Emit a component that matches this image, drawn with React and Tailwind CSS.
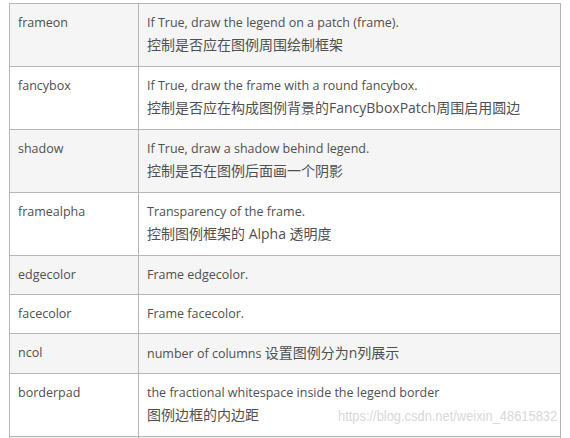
import React from "react"

const rows = [
  { name: "frameon", en: "If True, draw the legend on a patch (frame).", zh: "控制是否应在图例周围绘制框架", gray: true },
  { name: "fancybox", en: "If True, draw the frame with a round fancybox.", zh: "控制是否应在构成图例背景的FancyBboxPatch周围启用圆边" },
  { name: "shadow", en: "If True, draw a shadow behind legend.", zh: "控制是否在图例后面画一个阴影", gray: true },
  { name: "framealpha", en: "Transparency of the frame.", zh: "控制图例框架的 Alpha 透明度" },
  { name: "edgecolor", en: "Frame edgecolor.", gray: true },
  { name: "facecolor", en: "Frame facecolor." },
  { name: "ncol", en: "number of columns ", enZh: "设置图例分为n列展示", gray: true },
  { name: "borderpad", en: "the fractional whitespace inside the legend border", zh: "图例边框的内边距" },
  { name: "", en: "", gray: true },
]

const Row = ({ row }) => (
  <div className={`grid grid-cols-[129px_1fr] border-b border-[#b5b5b5] ${row.gray ? "bg-[#f5f5f5]" : "bg-white"}`}>
    <div className={`border-r border-[#b5b5b5] px-2 pt-2 ${row.zh ? "pb-[10px]" : "pb-2"}`}>
      <div className="leading-[22px]">{row.name}</div>
    </div>
    <div className={`px-2 pt-2 ${row.zh ? "pb-[10px]" : "pb-2"}`}>
      <div className="leading-[22px] whitespace-pre">
        {row.en}
        {row.enZh && <span className="text-[14px]">{row.enZh}</span>}
      </div>
      {row.zh && <div className="text-[14px] leading-[22px]">{row.zh}</div>}
    </div>
  </div>
)

export default function App() {
  return (
    <div className="relative h-[438px] overflow-hidden bg-white pl-[9px] pt-[3px] text-[12.5px] text-[#4f4f4f] font-['Open_Sans','Noto_Sans_CJK_SC',sans-serif]">
      <div className="w-[552px] border-x border-t border-[#b5b5b5]">
        {rows.map((row, i) => (
          <Row key={i} row={row} />
        ))}
      </div>
      {/* watermark */}
      <div className="absolute left-[338px] top-[405px] origin-left scale-x-[0.92] whitespace-nowrap text-[14px] leading-[22px] text-[#d8d8d8] font-['Liberation_Sans',sans-serif]">
        https://blog.csdn.net/weixin_48615832
      </div>
    </div>
  )
}
